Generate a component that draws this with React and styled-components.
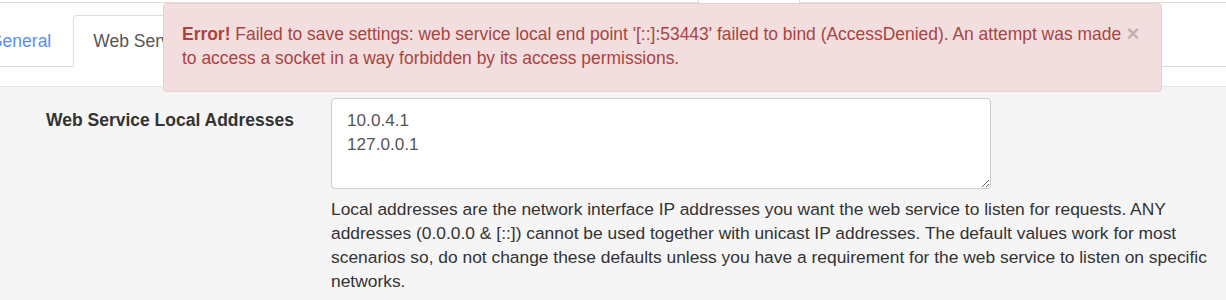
import React from "react";
import styled, { createGlobalStyle } from "styled-components";

const GlobalStyle = createGlobalStyle`
  html, body {
    margin: 0;
    padding: 0;
    background: #fff;
    font-family: "Liberation Sans", Arial, sans-serif;
    font-size: 17px;
    line-height: 24px;
    color: #333;
  }
  * {
    box-sizing: border-box;
  }
`;

const Page = styled.div`
  position: relative;
  width: 1226px;
  height: 300px;
  overflow: hidden;
  background: #fff;
`;

const TopStrip = styled.div`
  display: flex;
  height: 3px;
`;

const TopRule = styled.div`
  width: ${(p) => p.$width || "auto"};
  flex: ${(p) => (p.$grow ? 1 : "none")};
  border-bottom: 1px solid #ddd;
`;

const TopPiece = styled.div`
  width: 102px;
  border-left: 1px solid #ddd;
  border-right: 1px solid #ddd;
`;

const TabHeader = styled.div`
  padding-top: 12px;
  padding-bottom: 19px;
`;

const TabList = styled.ul`
  display: flex;
  list-style: none;
  margin: 0;
  padding: 0;
  border-bottom: 1px solid #ddd;
`;

const Tab = styled.li`
  margin-bottom: -1px;
  margin-right: 2px;
  margin-left: ${(p) => p.$offset || 0};
`;

const TabLink = styled.a`
  display: block;
  padding: 13px 19px;
  border: 1px solid ${(p) => (p.$active ? "#ddd" : "transparent")};
  border-bottom-color: ${(p) => (p.$active ? "#fff" : "transparent")};
  border-radius: 4px 4px 0 0;
  background: ${(p) => (p.$active ? "#fff" : "transparent")};
  color: ${(p) => (p.$active ? "#555" : "#5a8ef0")};
  font-size: 17.5px;
  text-decoration: none;
  white-space: nowrap;
  cursor: pointer;
`;

const Content = styled.div`
  background: #f5f5f5;
  border-top: 1px solid #e6e6e6;
  padding-top: 11px;
  height: 300px;
`;

const FormRow = styled.div`
  display: grid;
  grid-template-columns: 331px 1fr;
`;

const Label = styled.label`
  padding: 10px 0 0 46px;
  font-size: 17.5px;
  font-weight: bold;
  color: #333;
`;

const Field = styled.div`
  padding-right: 8px;
`;

const TextArea = styled.textarea`
  display: block;
  width: 660px;
  height: 91px;
  padding: 9px 15px 8px;
  border: 1px solid #ccc;
  border-radius: 4px;
  background: #fff;
  color: #555;
  font-family: "Liberation Sans", Arial, sans-serif;
  font-size: 17.2px;
  line-height: 24px;
  resize: vertical;
  outline: none;
`;

const Help = styled.p`
  margin: 8px 0 0;
  font-size: 17.4px;
  color: #333;
`;

const Alert = styled.div`
  position: absolute;
  top: 3px;
  left: 163px;
  width: 999px;
  height: 89px;
  display: flex;
  align-items: flex-start;
  gap: 1px;
  padding: 18px 21px 20px 18px;
  background: #f2dede;
  border: 1px solid #ebccd1;
  border-radius: 4px;
  color: #a94442;
  font-size: 17.45px;
`;

const Message = styled.div`
  flex: 1;
`;

const Close = styled.button`
  flex: none;
  width: 14px;
  padding: 0;
  border: 0;
  background: transparent;
  color: #000;
  opacity: 0.2;
  font-family: "Liberation Sans", Arial, sans-serif;
  font-size: 22px;
  font-weight: bold;
  line-height: 24px;
  cursor: pointer;
`;

export default function App() {
  return (
    <>
      <GlobalStyle />
      <Page>
        <TopStrip>
          <TopRule $width="698px" />
          <TopPiece />
          <TopRule $grow />
        </TopStrip>
        <TabHeader>
          <TabList>
            <Tab $offset="-31px">
              <TabLink>General</TabLink>
            </Tab>
            <Tab>
              <TabLink $active>Web Service</TabLink>
            </Tab>
            <Tab>
              <TabLink>Optional Protocols</TabLink>
            </Tab>
          </TabList>
        </TabHeader>
        <Content>
          <FormRow>
            <Label>Web Service Local Addresses</Label>
            <Field>
              <TextArea defaultValue={"10.0.4.1\n127.0.0.1"} />
              <Help>
                Local addresses are the network interface IP addresses you want the web service to
                listen for requests. ANY addresses (0.0.0.0 &amp; [::]) cannot be used together with
                unicast IP addresses. The default values work for most scenarios so, do not change
                these defaults unless you have a requirement for the web service to listen on
                specific networks.
              </Help>
            </Field>
          </FormRow>
        </Content>
        <Alert role="alert">
          <Message>
            <strong>Error!</strong> Failed to save settings: web service local end point
            '[::]:53443' failed to bind (AccessDenied). An attempt was made to access a socket in
            a way forbidden by its access permissions.
          </Message>
          <Close aria-label="close">×</Close>
        </Alert>
      </Page>
    </>
  );
}
